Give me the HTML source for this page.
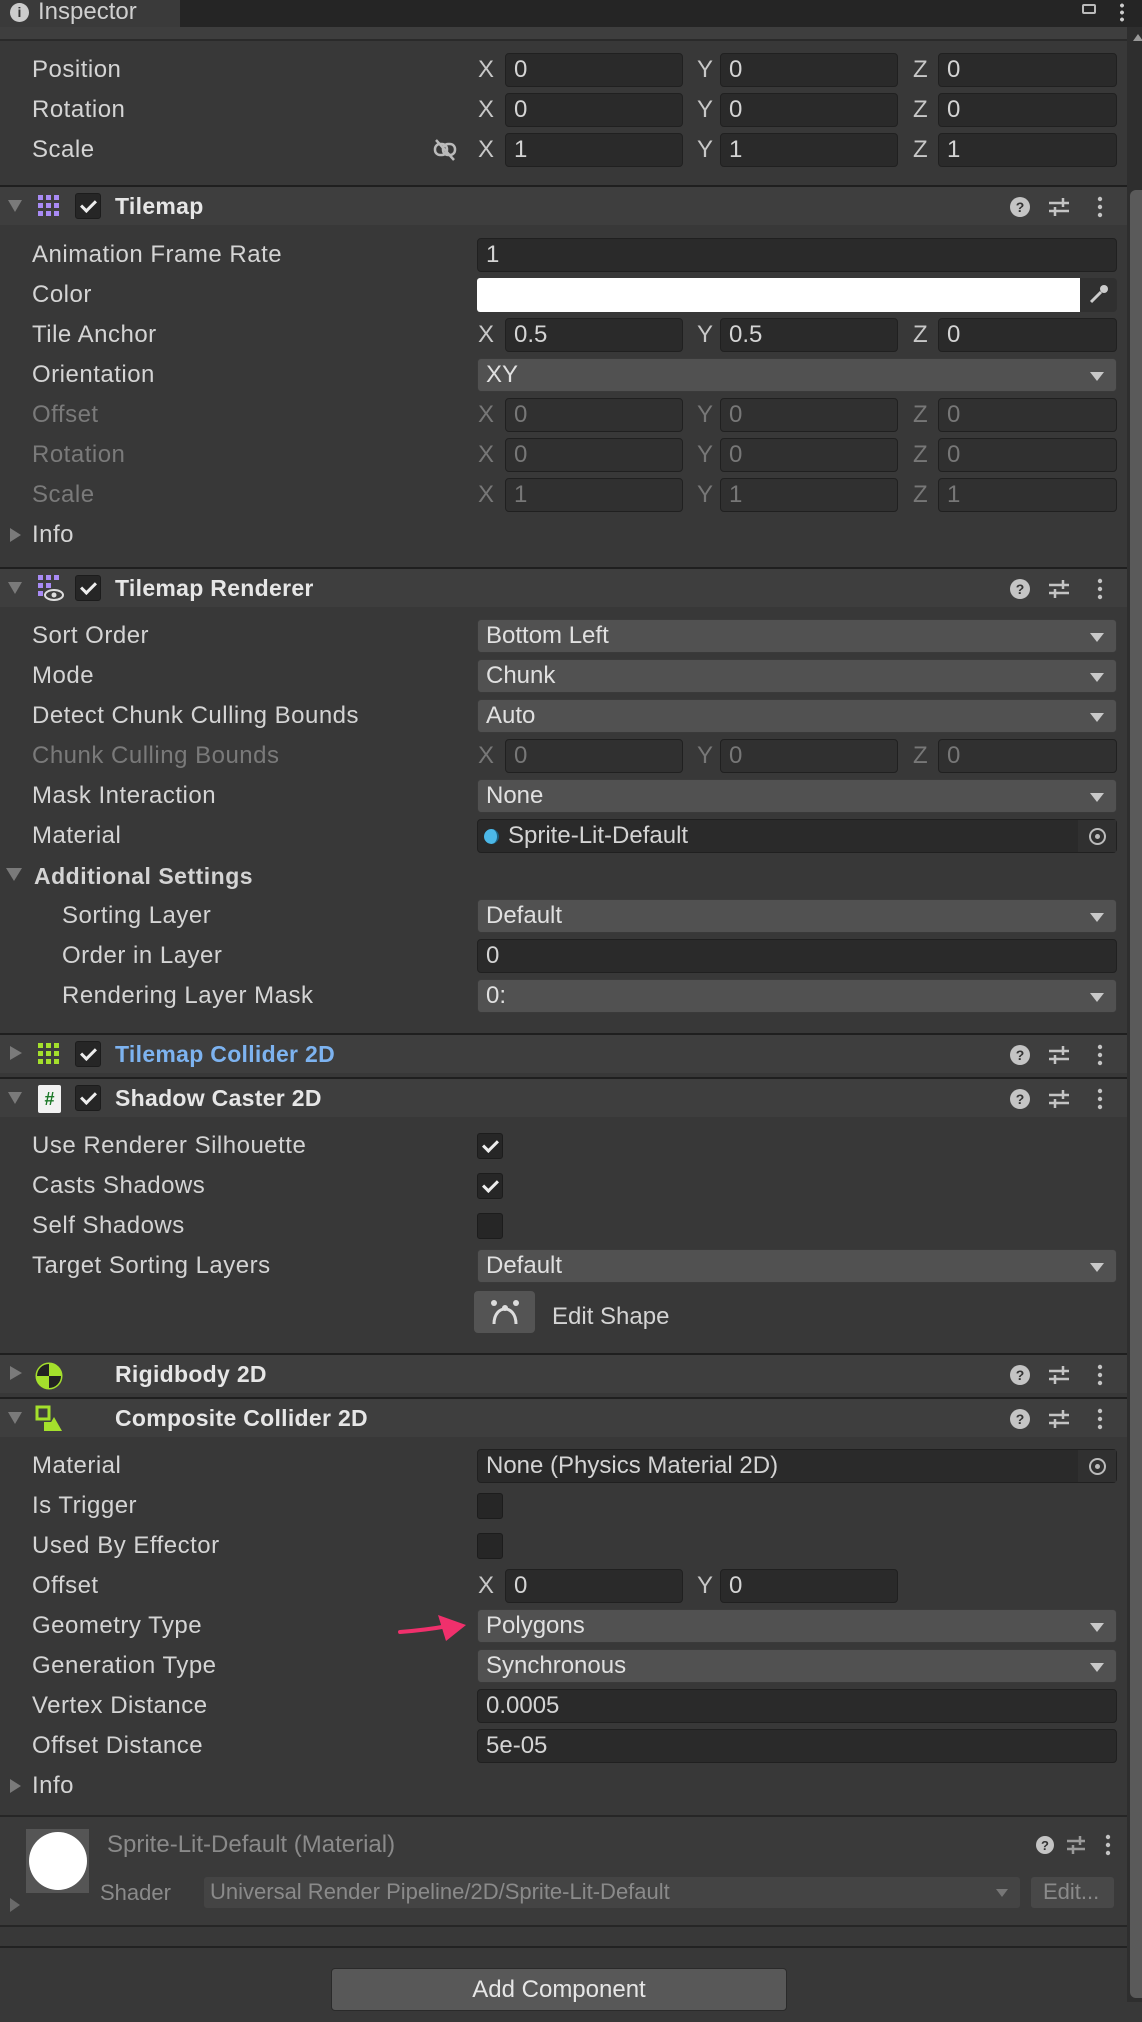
<!DOCTYPE html>
<html><head><meta charset="utf-8"><style>
*{box-sizing:border-box;margin:0;padding:0}
body{width:1142px;height:2022px;background:#383838;position:relative;overflow:hidden;font-family:"Liberation Sans",sans-serif;color:#d2d2d2}
.a{position:absolute}
.l{position:absolute;left:32px;height:34px;line-height:34px;font-size:24px;letter-spacing:.5px;color:#d4d4d4;white-space:nowrap}
.in{left:62px}
.d{color:#7a7a7a}
.f{position:absolute;height:34px;line-height:32px;background:#2a2a2a;border:1px solid #202020;border-radius:4px;padding-left:8px;font-size:24px;color:#d4d4d4;white-space:nowrap;overflow:hidden}
.dd{position:absolute;left:477px;width:640px;height:34px;line-height:32px;background:#515151;border:1px solid #3a3a3a;border-radius:4px;padding-left:8px;font-size:24px;color:#e0e0e0}
.dd:after{content:"";position:absolute;right:12px;top:13px;border-left:7px solid transparent;border-right:7px solid transparent;border-top:9px solid #c8c8c8}
.xl{position:absolute;height:34px;line-height:34px;font-size:24px;color:#c8c8c8}
.dis .f{color:#777;background:#303030}.dis .xl{color:#777}
.h{position:absolute;left:0;width:1127px;height:40px;background:#3e3e3e;border-top:2px solid #1f1f1f}
.h .t{position:absolute;left:115px;top:0;line-height:38px;font-size:23px;font-weight:bold;color:#e6e6e6;letter-spacing:.3px}
.tri{position:absolute;left:8px;top:13px;border-left:7px solid transparent;border-right:7px solid transparent;border-top:12px solid #7a7a7a}
.tr{position:absolute;left:10px;top:11px;border-top:7px solid transparent;border-bottom:7px solid transparent;border-left:12px solid #7a7a7a}
.cb{position:absolute;width:26px;height:26px;background:#262626;border:1px solid #1c1c1c;border-radius:3px}
.cb.k:after{content:"";position:absolute;left:8px;top:3px;width:6px;height:12px;border-right:3px solid #eee;border-bottom:3px solid #eee;transform:rotate(45deg)}
</style></head><body>
<div class="a" style="left:0;top:0;width:1142px;height:27px;background:#252525"></div>
<div class="a" style="left:0;top:0;width:180px;height:27px;background:#3a3a3a"></div>
<div class="a" style="left:10px;top:3px;width:19px;height:19px;border-radius:50%;background:#ccc;color:#333;font-size:14px;font-weight:bold;text-align:center;line-height:19px">i</div>
<div class="a" style="left:38px;top:-3px;font-size:24px;color:#cfcfcf;line-height:30px">Inspector</div>
<div class="a" style="left:1082px;top:4px;width:14px;height:10px;border:2px solid #bbb;border-radius:2px"></div>
<div class="a" style="left:1120px;top:2px;width:4px;height:20px;background:radial-gradient(circle,#ccc 45%,transparent 50%) 0 0/4px 7px repeat-y"></div>
<div class="a" style="left:0;top:27px;width:1127px;height:14px;background:#3e3e3e;border-bottom:2px solid #2a2a2a"></div>
<div class="a" style="left:1127px;top:27px;width:15px;height:1975px;background:#2e2e2e"></div>
<div class="a" style="left:1130px;top:190px;width:12px;height:1808px;background:#5a5a5a;border-radius:6px 0 0 6px"></div>
<div class="a" style="left:1133px;top:34px;border-left:5px solid transparent;border-right:5px solid transparent;border-bottom:7px solid #999"></div>

<div class="l" style="top:53px">Position</div>
<div class="l" style="top:93px">Rotation</div>
<div class="l" style="top:133px">Scale</div>
<svg class="a" style="left:432px;top:139px" width="26" height="22" viewBox="0 0 26 22"><g fill="none" stroke="#bbb" stroke-width="2.5"><rect x="3" y="5" width="12" height="11" rx="5"/><rect x="11" y="5" width="12" height="11" rx="5"/><line x1="4" y1="1" x2="22" y2="21"/></g></svg>

<div class="xl" style="left:478px;top:53px">X</div><div class="f" style="left:505px;top:53px;width:178px">0</div>
<div class="xl" style="left:697px;top:53px">Y</div><div class="f" style="left:720px;top:53px;width:178px">0</div>
<div class="xl" style="left:913px;top:53px">Z</div><div class="f" style="left:938px;top:53px;width:179px">0</div>
<div class="xl" style="left:478px;top:93px">X</div><div class="f" style="left:505px;top:93px;width:178px">0</div>
<div class="xl" style="left:697px;top:93px">Y</div><div class="f" style="left:720px;top:93px;width:178px">0</div>
<div class="xl" style="left:913px;top:93px">Z</div><div class="f" style="left:938px;top:93px;width:179px">0</div>
<div class="xl" style="left:478px;top:133px">X</div><div class="f" style="left:505px;top:133px;width:178px">1</div>
<div class="xl" style="left:697px;top:133px">Y</div><div class="f" style="left:720px;top:133px;width:178px">1</div>
<div class="xl" style="left:913px;top:133px">Z</div><div class="f" style="left:938px;top:133px;width:179px">1</div>

<div class="h" style="top:185px"><div class="tri"></div>
<svg class="a" style="left:38px;top:8px" width="22" height="22"><g fill="#a98bf5"><rect x="0" y="0" width="5" height="5"/><rect x="8" y="0" width="5" height="5"/><rect x="16" y="0" width="5" height="5"/><rect x="0" y="8" width="5" height="5"/><rect x="8" y="8" width="5" height="5"/><rect x="16" y="8" width="5" height="5"/><rect x="0" y="16" width="5" height="5"/><rect x="8" y="16" width="5" height="5"/><rect x="16" y="16" width="5" height="5"/></g></svg>
<div class="cb k" style="left:75px;top:6px"></div><div class="t">Tilemap</div>
<svg class="a" style="left:1008px;top:8px" width="110" height="24"><circle cx="12" cy="12" r="10" fill="#c4c4c4"/><text x="12" y="17" font-size="14" font-weight="bold" text-anchor="middle" fill="#333" font-family="Liberation Sans">?</text><g stroke="#c4c4c4" stroke-width="2.5"><line x1="41" y1="8" x2="61" y2="8"/><line x1="41" y1="16" x2="61" y2="16"/><line x1="55" y1="3" x2="55" y2="12"/><line x1="47" y1="12" x2="47" y2="21"/></g><g fill="#c4c4c4"><circle cx="92" cy="4" r="2.2"/><circle cx="92" cy="12" r="2.2"/><circle cx="92" cy="20" r="2.2"/></g></svg>
</div>
<div class="l" style="top:238px">Animation Frame Rate</div><div class="f" style="left:477px;top:238px;width:640px">1</div>
<div class="l" style="top:278px">Color</div><div class="a" style="left:477px;top:278px;width:603px;height:34px;background:#fff;border-radius:3px 0 0 3px"></div>
<div class="a" style="left:1080px;top:278px;width:37px;height:34px;background:#303030;border-radius:0 4px 4px 0"></div>
<svg class="a" style="left:1087px;top:284px" width="22" height="22"><line x1="4" y1="18" x2="14" y2="8" stroke="#ccc" stroke-width="3"/><circle cx="17" cy="5" r="4" fill="#ccc"/></svg>
<div class="l" style="top:318px">Tile Anchor</div>
<div class="xl" style="left:478px;top:318px">X</div><div class="f" style="left:505px;top:318px;width:178px">0.5</div>
<div class="xl" style="left:697px;top:318px">Y</div><div class="f" style="left:720px;top:318px;width:178px">0.5</div>
<div class="xl" style="left:913px;top:318px">Z</div><div class="f" style="left:938px;top:318px;width:179px">0</div>
<div class="l" style="top:358px">Orientation</div><div class="dd" style="top:358px">XY</div>
<div class="dis">
<div class="l d" style="top:398px">Offset</div>
<div class="xl" style="left:478px;top:398px">X</div><div class="f" style="left:505px;top:398px;width:178px">0</div>
<div class="xl" style="left:697px;top:398px">Y</div><div class="f" style="left:720px;top:398px;width:178px">0</div>
<div class="xl" style="left:913px;top:398px">Z</div><div class="f" style="left:938px;top:398px;width:179px">0</div>
<div class="l d" style="top:438px">Rotation</div>
<div class="xl" style="left:478px;top:438px">X</div><div class="f" style="left:505px;top:438px;width:178px">0</div>
<div class="xl" style="left:697px;top:438px">Y</div><div class="f" style="left:720px;top:438px;width:178px">0</div>
<div class="xl" style="left:913px;top:438px">Z</div><div class="f" style="left:938px;top:438px;width:179px">0</div>
<div class="l d" style="top:478px">Scale</div>
<div class="xl" style="left:478px;top:478px">X</div><div class="f" style="left:505px;top:478px;width:178px">1</div>
<div class="xl" style="left:697px;top:478px">Y</div><div class="f" style="left:720px;top:478px;width:178px">1</div>
<div class="xl" style="left:913px;top:478px">Z</div><div class="f" style="left:938px;top:478px;width:179px">1</div>
</div>
<div class="a" style="left:10px;top:528px;border-top:7px solid transparent;border-bottom:7px solid transparent;border-left:11px solid #7a7a7a"></div>
<div class="l" style="top:518px">Info</div>

<div class="h" style="top:567px"><div class="tri"></div>
<svg class="a" style="left:36px;top:6px" width="28" height="28"><g fill="#a98bf5"><rect x="2" y="0" width="5" height="5"/><rect x="10" y="0" width="5" height="5"/><rect x="18" y="0" width="5" height="5"/><rect x="2" y="8" width="5" height="5"/><rect x="10" y="8" width="5" height="5"/><rect x="2" y="16" width="5" height="5"/></g><ellipse cx="18" cy="20" rx="9" ry="5" fill="none" stroke="#ddd" stroke-width="2"/><circle cx="18" cy="20" r="2.5" fill="#ddd"/></svg>
<div class="cb k" style="left:75px;top:6px"></div><div class="t">Tilemap Renderer</div>
<svg class="a" style="left:1008px;top:8px" width="110" height="24"><circle cx="12" cy="12" r="10" fill="#c4c4c4"/><text x="12" y="17" font-size="14" font-weight="bold" text-anchor="middle" fill="#333" font-family="Liberation Sans">?</text><g stroke="#c4c4c4" stroke-width="2.5"><line x1="41" y1="8" x2="61" y2="8"/><line x1="41" y1="16" x2="61" y2="16"/><line x1="55" y1="3" x2="55" y2="12"/><line x1="47" y1="12" x2="47" y2="21"/></g><g fill="#c4c4c4"><circle cx="92" cy="4" r="2.2"/><circle cx="92" cy="12" r="2.2"/><circle cx="92" cy="20" r="2.2"/></g></svg>
</div>
<div class="l" style="top:619px">Sort Order</div><div class="dd" style="top:619px">Bottom Left</div>
<div class="l" style="top:659px">Mode</div><div class="dd" style="top:659px">Chunk</div>
<div class="l" style="top:699px">Detect Chunk Culling Bounds</div><div class="dd" style="top:699px">Auto</div>
<div class="dis">
<div class="l d" style="top:739px">Chunk Culling Bounds</div>
<div class="xl" style="left:478px;top:739px">X</div><div class="f" style="left:505px;top:739px;width:178px">0</div>
<div class="xl" style="left:697px;top:739px">Y</div><div class="f" style="left:720px;top:739px;width:178px">0</div>
<div class="xl" style="left:913px;top:739px">Z</div><div class="f" style="left:938px;top:739px;width:179px">0</div>
</div>
<div class="l" style="top:779px">Mask Interaction</div><div class="dd" style="top:779px">None</div>
<div class="l" style="top:819px">Material</div><div class="f" style="left:477px;top:819px;width:640px;padding-left:30px">Sprite-Lit-Default</div>
<div class="a" style="left:484px;top:829px;width:15px;height:15px;border-radius:50%;background:#4cb8e8;border-right:2px solid #1b5f80"></div>
<div class="a" style="left:1078px;top:820px;width:38px;height:32px;background:#303030"></div>
<div class="a" style="left:1089px;top:828px;width:17px;height:17px;border-radius:50%;border:2px solid #bbb"></div><div class="a" style="left:1095px;top:834px;width:5px;height:5px;border-radius:50%;background:#bbb"></div>
<div class="a" style="left:6px;top:868px;border-left:8px solid transparent;border-right:8px solid transparent;border-top:13px solid #7a7a7a"></div>
<div class="l" style="top:859px;left:34px;font-weight:bold;font-size:23px">Additional Settings</div>
<div class="l in" style="top:899px">Sorting Layer</div><div class="dd" style="top:899px">Default</div>
<div class="l in" style="top:939px">Order in Layer</div><div class="f" style="left:477px;top:939px;width:640px">0</div>
<div class="l in" style="top:979px">Rendering Layer Mask</div><div class="dd" style="top:979px">0:</div>

<div class="h" style="top:1033px"><div class="tr"></div>
<svg class="a" style="left:38px;top:8px" width="22" height="22"><g fill="#a4e02c"><rect x="0" y="0" width="5" height="5"/><rect x="8" y="0" width="5" height="5"/><rect x="16" y="0" width="5" height="5"/><rect x="0" y="8" width="5" height="5"/><rect x="8" y="8" width="5" height="5"/><rect x="16" y="8" width="5" height="5"/><rect x="0" y="16" width="5" height="5"/><rect x="8" y="16" width="5" height="5"/><rect x="16" y="16" width="5" height="5"/></g></svg>
<div class="cb k" style="left:75px;top:6px"></div><div class="t" style="color:#7db3f0">Tilemap Collider 2D</div>
<svg class="a" style="left:1008px;top:8px" width="110" height="24"><circle cx="12" cy="12" r="10" fill="#c4c4c4"/><text x="12" y="17" font-size="14" font-weight="bold" text-anchor="middle" fill="#333" font-family="Liberation Sans">?</text><g stroke="#c4c4c4" stroke-width="2.5"><line x1="41" y1="8" x2="61" y2="8"/><line x1="41" y1="16" x2="61" y2="16"/><line x1="55" y1="3" x2="55" y2="12"/><line x1="47" y1="12" x2="47" y2="21"/></g><g fill="#c4c4c4"><circle cx="92" cy="4" r="2.2"/><circle cx="92" cy="12" r="2.2"/><circle cx="92" cy="20" r="2.2"/></g></svg>
</div>
<div class="h" style="top:1077px"><div class="tri"></div>
<div class="a" style="left:38px;top:6px;width:23px;height:28px;background:#f2f2f2;border-radius:2px;color:#1e7a2a;font-weight:bold;font-size:18px;text-align:center;line-height:28px">#</div>
<div class="cb k" style="left:75px;top:6px"></div><div class="t">Shadow Caster 2D</div>
<svg class="a" style="left:1008px;top:8px" width="110" height="24"><circle cx="12" cy="12" r="10" fill="#c4c4c4"/><text x="12" y="17" font-size="14" font-weight="bold" text-anchor="middle" fill="#333" font-family="Liberation Sans">?</text><g stroke="#c4c4c4" stroke-width="2.5"><line x1="41" y1="8" x2="61" y2="8"/><line x1="41" y1="16" x2="61" y2="16"/><line x1="55" y1="3" x2="55" y2="12"/><line x1="47" y1="12" x2="47" y2="21"/></g><g fill="#c4c4c4"><circle cx="92" cy="4" r="2.2"/><circle cx="92" cy="12" r="2.2"/><circle cx="92" cy="20" r="2.2"/></g></svg>
</div>
<div class="l" style="top:1129px">Use Renderer Silhouette</div><div class="cb k" style="left:477px;top:1133px"></div>
<div class="l" style="top:1169px">Casts Shadows</div><div class="cb k" style="left:477px;top:1173px"></div>
<div class="l" style="top:1209px">Self Shadows</div><div class="cb" style="left:477px;top:1213px"></div>
<div class="l" style="top:1249px">Target Sorting Layers</div><div class="dd" style="top:1249px">Default</div>
<div class="a" style="left:474px;top:1291px;width:61px;height:42px;background:#545454;border-radius:4px"></div>
<svg class="a" style="left:488px;top:1298px" width="34" height="28"><path d="M6 26 C6 6 28 6 28 26" fill="none" stroke="#ddd" stroke-width="3"/><circle cx="6" cy="5" r="3" fill="#ddd"/><circle cx="28" cy="5" r="3" fill="#ddd"/><circle cx="17" cy="10" r="3" fill="#ddd"/></svg>
<div class="a" style="left:552px;top:1300px;font-size:24px;line-height:34px;color:#d4d4d4">Edit Shape</div>
<div class="h" style="top:1353px"><div class="tr"></div>
<svg class="a" style="left:34px;top:6px" width="30" height="30"><circle cx="15" cy="15" r="12" fill="#a4e02c" stroke="#a4e02c" stroke-width="3"/><path d="M15 15 H27 A12 12 0 0 1 15 27 Z M15 15 H3 A12 12 0 0 1 15 3 Z" fill="#222"/></svg>
<div class="t">Rigidbody 2D</div>
<svg class="a" style="left:1008px;top:8px" width="110" height="24"><circle cx="12" cy="12" r="10" fill="#c4c4c4"/><text x="12" y="17" font-size="14" font-weight="bold" text-anchor="middle" fill="#333" font-family="Liberation Sans">?</text><g stroke="#c4c4c4" stroke-width="2.5"><line x1="41" y1="8" x2="61" y2="8"/><line x1="41" y1="16" x2="61" y2="16"/><line x1="55" y1="3" x2="55" y2="12"/><line x1="47" y1="12" x2="47" y2="21"/></g><g fill="#c4c4c4"><circle cx="92" cy="4" r="2.2"/><circle cx="92" cy="12" r="2.2"/><circle cx="92" cy="20" r="2.2"/></g></svg>
</div>
<div class="h" style="top:1397px"><div class="tri"></div>
<svg class="a" style="left:34px;top:6px" width="30" height="28"><rect x="3" y="2" width="12" height="12" fill="none" stroke="#a4e02c" stroke-width="3"/><path d="M12 26 L20 12 L28 26 Z" fill="#a4e02c"/><rect x="10" y="17" width="8" height="9" fill="#a4e02c"/></svg>
<div class="t">Composite Collider 2D</div>
<svg class="a" style="left:1008px;top:8px" width="110" height="24"><circle cx="12" cy="12" r="10" fill="#c4c4c4"/><text x="12" y="17" font-size="14" font-weight="bold" text-anchor="middle" fill="#333" font-family="Liberation Sans">?</text><g stroke="#c4c4c4" stroke-width="2.5"><line x1="41" y1="8" x2="61" y2="8"/><line x1="41" y1="16" x2="61" y2="16"/><line x1="55" y1="3" x2="55" y2="12"/><line x1="47" y1="12" x2="47" y2="21"/></g><g fill="#c4c4c4"><circle cx="92" cy="4" r="2.2"/><circle cx="92" cy="12" r="2.2"/><circle cx="92" cy="20" r="2.2"/></g></svg>
</div>
<div class="l" style="top:1449px">Material</div><div class="f" style="left:477px;top:1449px;width:640px">None (Physics Material 2D)</div>
<div class="a" style="left:1078px;top:1450px;width:38px;height:32px;background:#303030"></div>
<div class="a" style="left:1089px;top:1458px;width:17px;height:17px;border-radius:50%;border:2px solid #bbb"></div><div class="a" style="left:1095px;top:1464px;width:5px;height:5px;border-radius:50%;background:#bbb"></div>
<div class="l" style="top:1489px">Is Trigger</div><div class="cb" style="left:477px;top:1493px"></div>
<div class="l" style="top:1529px">Used By Effector</div><div class="cb" style="left:477px;top:1533px"></div>
<div class="l" style="top:1569px">Offset</div>
<div class="xl" style="left:478px;top:1569px">X</div><div class="f" style="left:505px;top:1569px;width:178px">0</div>
<div class="xl" style="left:697px;top:1569px">Y</div><div class="f" style="left:720px;top:1569px;width:178px">0</div>
<div class="l" style="top:1609px">Geometry Type</div><div class="dd" style="top:1609px">Polygons</div>
<svg class="a" style="left:396px;top:1612px" width="74" height="32"><path d="M4 20 Q30 18 52 14" stroke="#f0306c" stroke-width="4" fill="none" stroke-linecap="round"/><path d="M42 3 L70 13 L50 29 Z" fill="#f0306c"/></svg>
<div class="l" style="top:1649px">Generation Type</div><div class="dd" style="top:1649px">Synchronous</div>
<div class="l" style="top:1689px">Vertex Distance</div><div class="f" style="left:477px;top:1689px;width:640px">0.0005</div>
<div class="l" style="top:1729px">Offset Distance</div><div class="f" style="left:477px;top:1729px;width:640px">5e-05</div>
<div class="a" style="left:10px;top:1779px;border-top:7px solid transparent;border-bottom:7px solid transparent;border-left:11px solid #7a7a7a"></div>
<div class="l" style="top:1769px">Info</div>

<div class="a" style="left:0;top:1815px;width:1127px;height:2px;background:#262626"></div>
<div class="a" style="left:0;top:1817px;width:1127px;height:109px;background:#3a3a3a"></div>
<div class="a" style="left:26px;top:1829px;width:63px;height:64px;background:#555"></div>
<div class="a" style="left:29px;top:1832px;width:58px;height:58px;border-radius:50%;background:#fff"></div>
<div class="a" style="left:10px;top:1898px;border-top:7px solid transparent;border-bottom:7px solid transparent;border-left:10px solid #6a6a6a"></div>
<div class="a" style="left:107px;top:1828px;font-size:24px;line-height:34px;color:#8a8a8a">Sprite-Lit-Default (Material)</div>
<svg class="a" style="left:1034px;top:1833px" width="90" height="24"><circle cx="11" cy="12" r="9" fill="#c4c4c4"/><text x="11" y="17" font-size="13" font-weight="bold" text-anchor="middle" fill="#333" font-family="Liberation Sans">?</text><g stroke="#9a9a9a" stroke-width="2.5"><line x1="33" y1="8" x2="51" y2="8"/><line x1="33" y1="16" x2="51" y2="16"/><line x1="46" y1="3" x2="46" y2="12"/><line x1="39" y1="12" x2="39" y2="21"/></g><g fill="#c4c4c4"><circle cx="74" cy="4" r="2.2"/><circle cx="74" cy="12" r="2.2"/><circle cx="74" cy="20" r="2.2"/></g></svg>
<div class="a" style="left:100px;top:1876px;font-size:22px;line-height:34px;color:#8a8a8a">Shader</div>
<div class="a" style="left:204px;top:1877px;width:816px;height:31px;background:#444;border-radius:3px;font-size:22px;line-height:30px;color:#8a8a8a;padding-left:6px">Universal Render Pipeline/2D/Sprite-Lit-Default</div>
<div class="a" style="left:996px;top:1889px;border-left:6px solid transparent;border-right:6px solid transparent;border-top:8px solid #777"></div>
<div class="a" style="left:1031px;top:1877px;width:83px;height:31px;background:#484848;border-radius:3px;font-size:22px;line-height:30px;color:#8a8a8a;padding-left:12px">Edit...</div>
<div class="a" style="left:0;top:1925px;width:1127px;height:2px;background:#262626"></div>
<div class="a" style="left:0;top:1946px;width:1127px;height:2px;background:#222"></div>
<div class="a" style="left:331px;top:1968px;width:456px;height:43px;background:#585858;border:1px solid #2a2a2a;border-radius:4px;font-size:24px;line-height:41px;text-align:center;color:#e6e6e6">Add Component</div>
</body></html>
